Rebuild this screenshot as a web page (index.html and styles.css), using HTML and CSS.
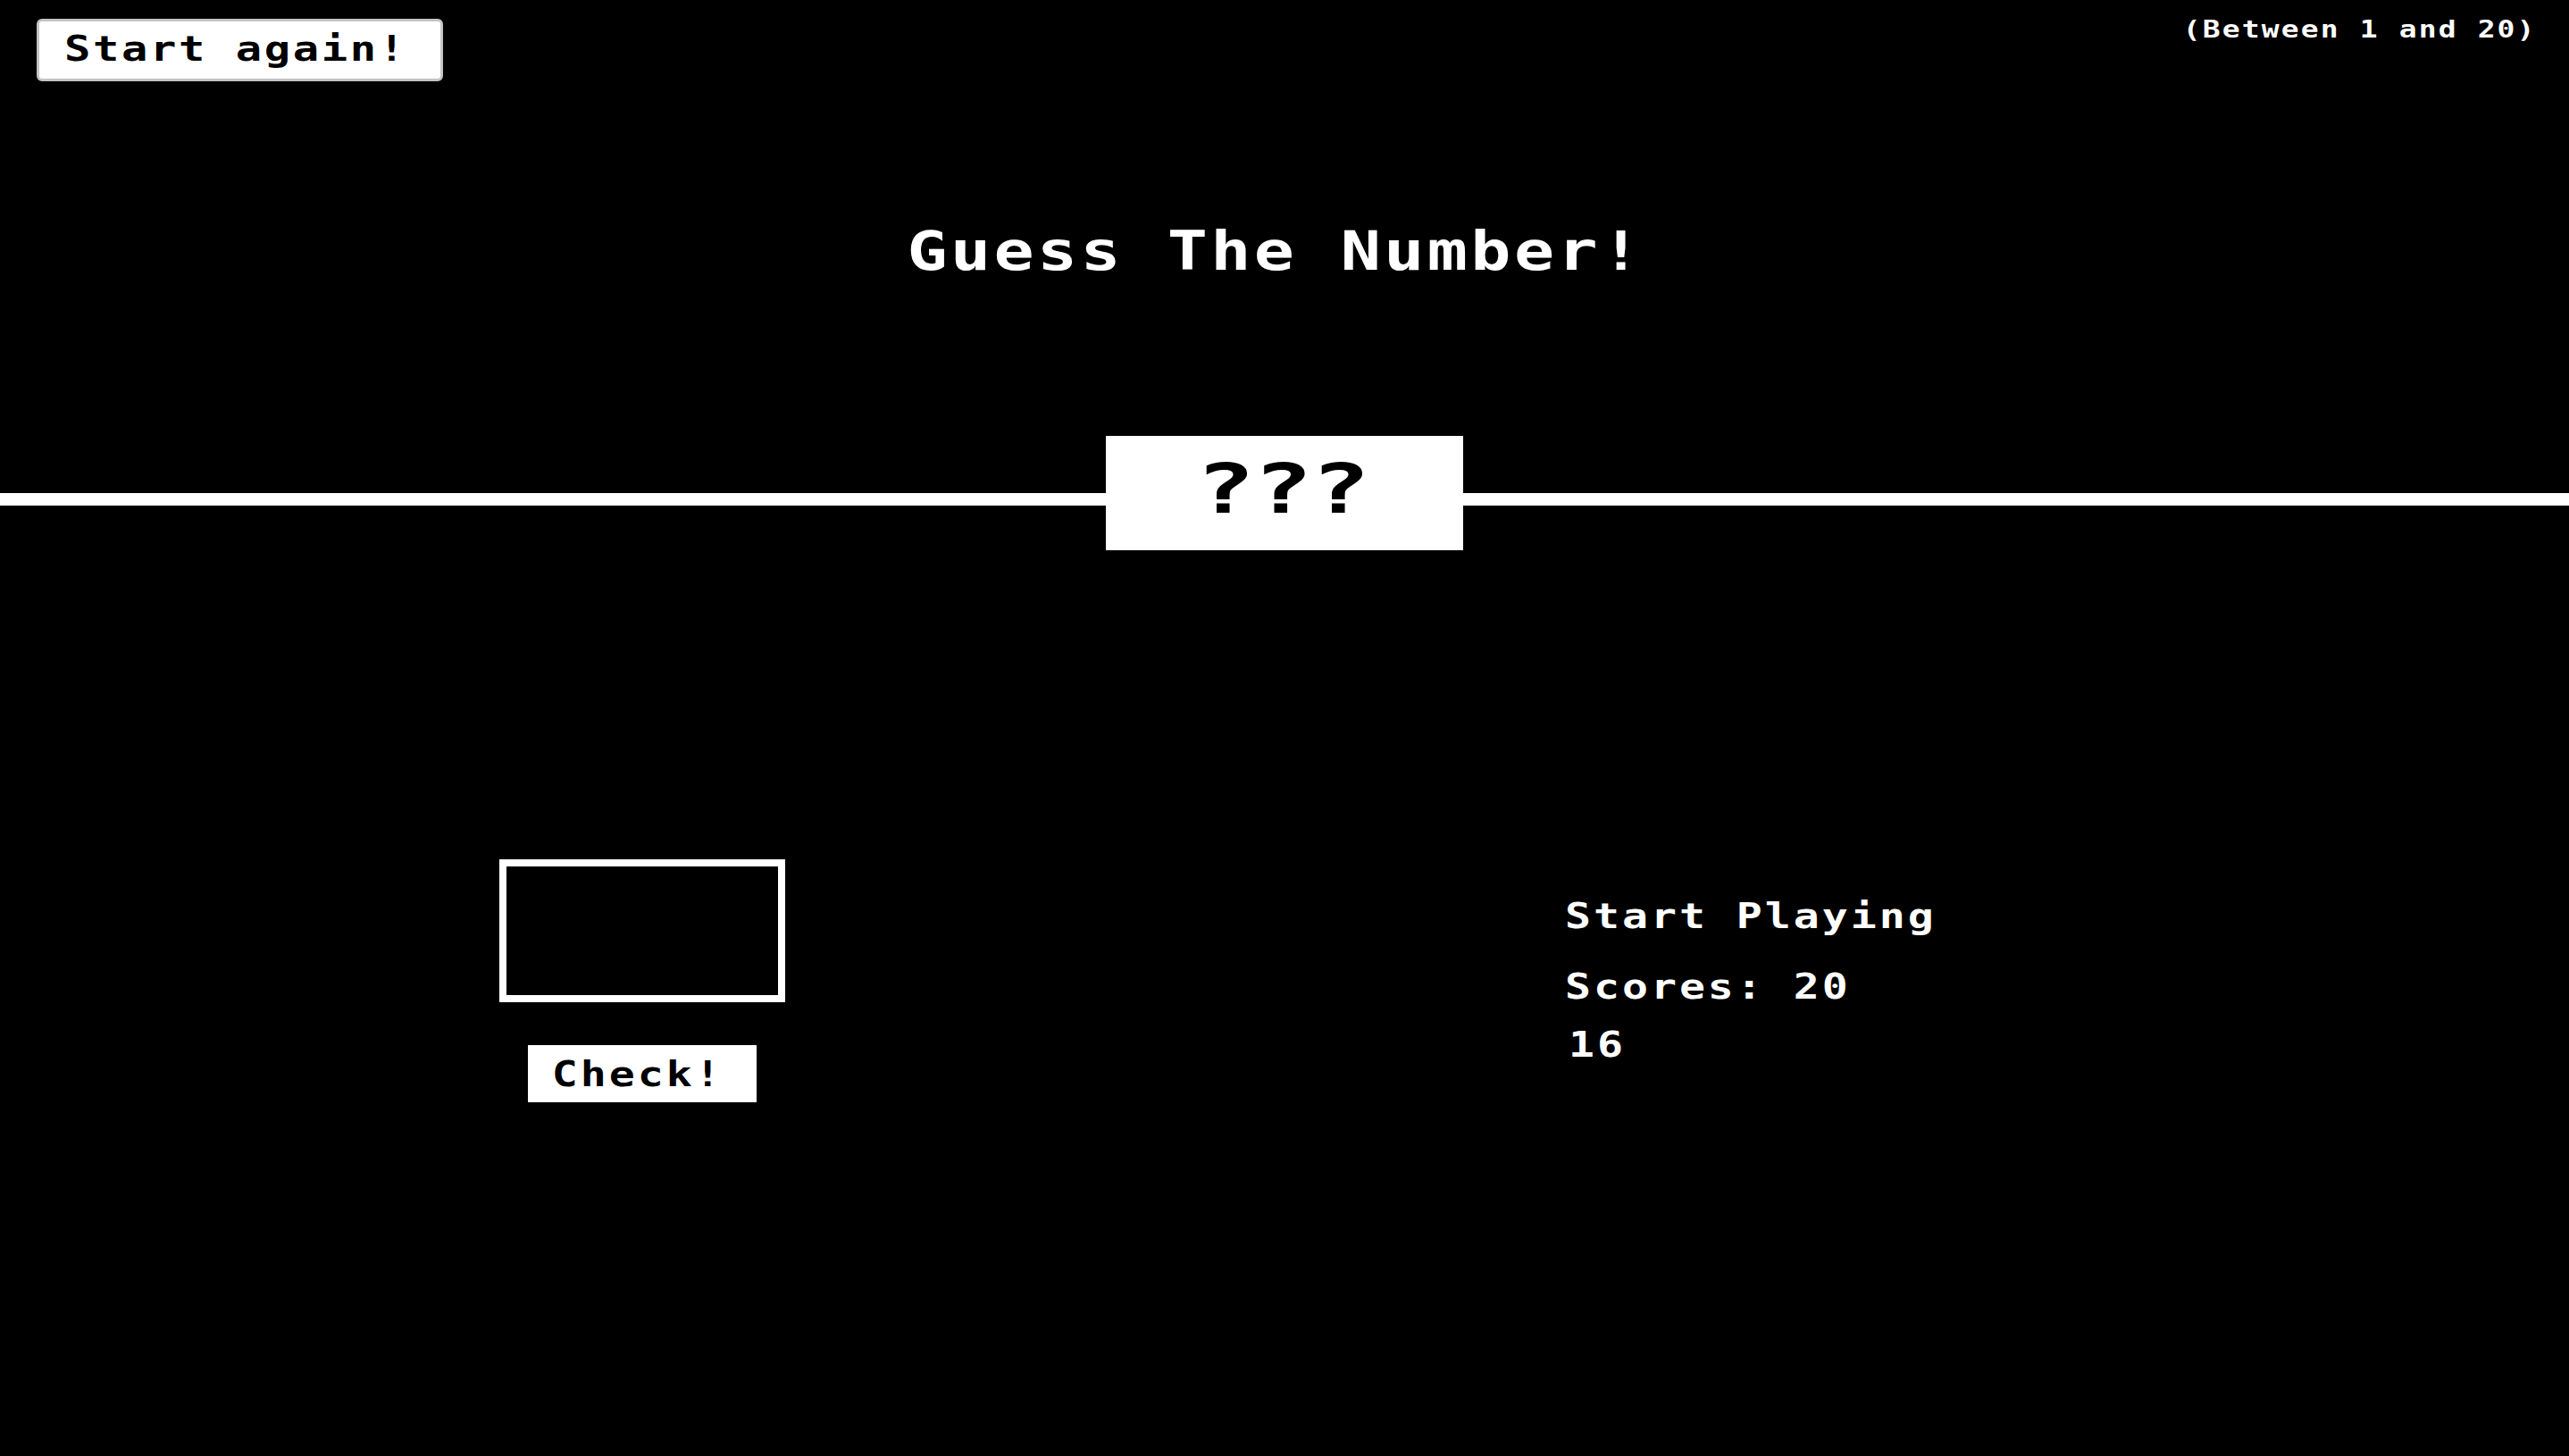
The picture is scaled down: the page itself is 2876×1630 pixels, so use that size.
FILE: index.html
```html
<!DOCTYPE html>
<html lang="en">
<head>
<meta charset="utf-8">
<title>Guess The Number!</title>
<link rel="stylesheet" href="styles.css">
</head>
<body>
<header class="header">
  <div class="topbar">
    <button class="btn again" type="button"><span class="wide">Start again!</span></button>
    <p class="between"><span class="wide">(Between 1 and 20)</span></p>
  </div>
  <h1 class="title"><span class="wide">Guess The Number!</span></h1>
  <div class="number"><span class="wide">???</span></div>
</header>
<main class="main">
  <section class="left">
    <input class="guess" type="number" aria-label="Your guess">
    <button class="btn check" type="button"><span class="wide">Check!</span></button>
  </section>
  <section class="right">
    <p class="message"><span class="wide">Start Playing</span></p>
    <p class="label-score"><span class="wide">Scores: <span class="score">20</span></span></p>
    <p class="label-highscore"><span class="wide highscore">16</span></p>
  </section>
</main>
</body>
</html>
```
FILE: styles.css
```css
* {
  box-sizing: border-box;
  margin: 0;
  padding: 0;
}

html, body {
  width: 2876px;
  height: 1630px;
  overflow: hidden;
}

body {
  background: #000;
  color: #fff;
  font-family: "DejaVu Sans Mono", "Liberation Mono", monospace;
  font-weight: bold;
}

/* blocky, wide lettering: the mono face stretched sideways */
.wide {
  display: inline-block;
  transform: scaleX(1.25);
  transform-origin: left center;
  white-space: nowrap;
}

/* ---------- header ---------- */
.header {
  position: relative;
  height: 566px;
  border-bottom: 14px solid #fff;
}

.topbar {
  display: flex;
  justify-content: space-between;
  align-items: flex-start;
  padding: 20px 36px 0 41px;
}

.btn {
  font-family: inherit;
  font-weight: bold;
  color: #000;
  background: #fff;
  cursor: pointer;
}

.again {
  margin-top: 1px;
  width: 455px;
  height: 70px;
  border: 3px solid #c4c4c4;
  border-radius: 6px;
  padding: 0 0 4px 28px;
  text-align: left;
  font-size: 39px;
  letter-spacing: 2.1px;
}

.between {
  font-size: 26.4px;
  line-height: 1;
  letter-spacing: 1.7px;
}

.between .wide {
  transform-origin: right center;
}

.title {
  margin-top: 160px;
  text-align: center;
  font-size: 60px;
  line-height: 1;
  letter-spacing: 2.7px;
  padding-right: 20px;
}

.title .wide,
.number .wide,
.check .wide {
  transform-origin: center center;
}

.number {
  position: absolute;
  left: 50%;
  bottom: 0;
  transform: translate(-50%, 50%);
  width: 400px;
  height: 128px;
  background: #fff;
  color: #000;
  display: flex;
  align-items: center;
  justify-content: center;
  padding: 0 6px 10px 0;
  font-size: 77px;
  line-height: 1;
  letter-spacing: -1.9px;
}

.number .wide {
  transform: scaleX(1.45);
}

/* ---------- main ---------- */
.main {
  height: 1064px;
  display: flex;
  align-items: center;
  justify-content: space-around;
}

.left {
  width: 810px;
  display: flex;
  flex-direction: column;
  align-items: center;
}

.guess {
  display: block;
  width: 320px;
  height: 160px;
  border: 8px solid #fff;
  background: transparent;
  color: #fff;
  font-family: inherit;
  font-size: 64px;
  text-align: center;
  outline: none;
  margin-bottom: 48px;
}

.check {
  width: 256px;
  height: 64px;
  border: none;
  padding-right: 10px;
  font-size: 38.5px;
  letter-spacing: 2.4px;
}

.right {
  width: 810px;
  font-size: 38.5px;
  line-height: 48px;
  letter-spacing: 2.4px;
}

.message {
  margin-bottom: 31px;
}

.label-score {
  margin-bottom: 17px;
}

.label-highscore {
  padding-left: 4px;
}
```
